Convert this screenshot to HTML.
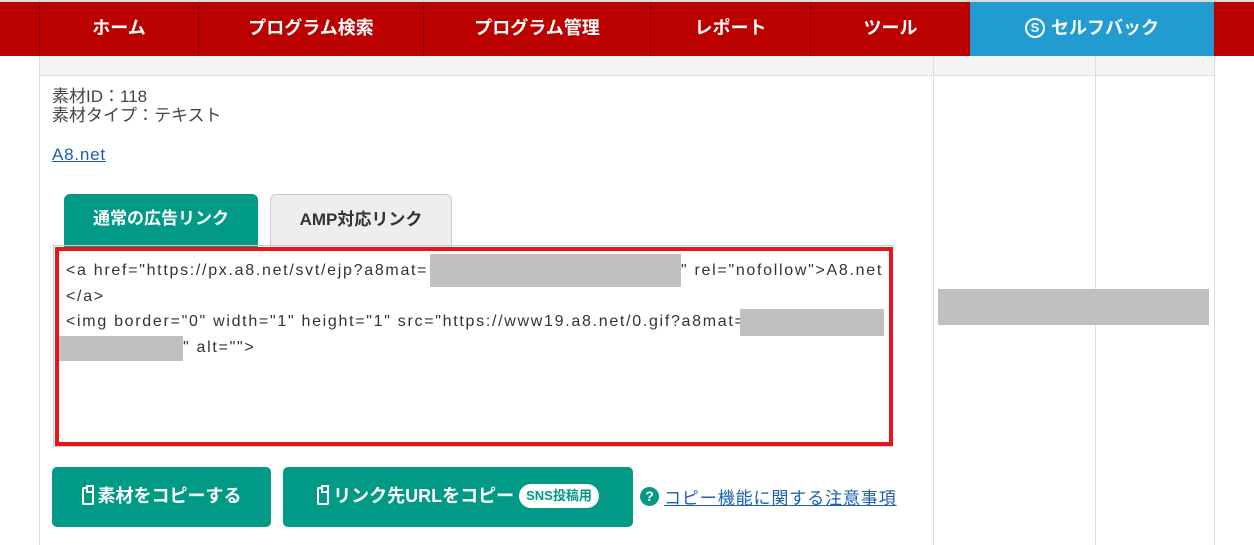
<!DOCTYPE html>
<html><head><meta charset="utf-8"><style>
*{margin:0;padding:0;box-sizing:border-box}
body{width:1254px;height:545px;overflow:hidden;background:#fff;font-family:"Liberation Sans","Noto Sans CJK JP",sans-serif;position:relative;color:#333}
.a{position:absolute}
.nav{left:0;top:2px;width:1254px;height:54px;background:#bb0000}
.ni{position:absolute;top:0;height:54px;border-left:1px solid #8a0000;color:#fff;font-weight:bold;font-size:18px;line-height:52px;text-align:center}
.g{background:#c0c0c0}
.code{font-size:16px;line-height:20px;color:#333;letter-spacing:1.7px;white-space:nowrap}
.btn{background:#009a86;color:#fff;font-weight:bold;font-size:18px;border-radius:5px;height:60px;line-height:58px;text-align:center}
.clip{display:inline-block;width:12px;height:18px;border:2px solid #fff;border-radius:2px;vertical-align:-3px;margin-right:4px;position:relative}
.clip:after{content:"";position:absolute;left:2px;top:-4px;width:4px;height:4px;border:2px solid #fff;background:#009a86}
</style></head><body>
<div class="a" style="left:0;top:0;width:1254px;height:2px;background:#ddd"></div>
<div class="a nav">
<div class="ni" style="left:39px;width:159px">ホーム</div>
<div class="ni" style="left:198px;width:225px">プログラム検索</div>
<div class="ni" style="left:423px;width:227px">プログラム管理</div>
<div class="ni" style="left:650px;width:160px">レポート</div>
<div class="ni" style="left:810px;width:160px">ツール</div>
<div class="ni" style="left:970px;width:244px;background:#229bd0;border-left:none"><span style="display:inline-block;width:20px;height:20px;border:2px solid #fff;border-radius:50%;font-size:13px;line-height:16px;vertical-align:2px;margin-right:6px">S</span>セルフバック</div>
</div>
<div class="a" style="left:39px;top:56px;width:1175px;height:20px;background:#f4f4f4;border-bottom:1px dotted #ccc"></div>
<div class="a" style="left:39px;top:56px;width:1px;height:489px;background:#ddd"></div>
<div class="a" style="left:933px;top:56px;width:1px;height:489px;background:#ddd"></div>
<div class="a" style="left:1095px;top:56px;width:1px;height:489px;background:#ddd"></div>
<div class="a" style="left:1214px;top:56px;width:1px;height:489px;background:#ddd"></div>
<div class="a" style="left:52px;top:87px;font-size:17px;line-height:19px;color:#444">素材ID：118<br>素材タイプ：テキスト</div>
<div class="a" style="left:52px;top:145px;font-size:17px;letter-spacing:0.8px;color:#1a5fb4;text-decoration:underline">A8.net</div>
<div class="a" style="left:64px;top:194px;width:194px;height:54px;background:#009a86;border-radius:6px 6px 0 0;color:#fff;font-weight:bold;font-size:17px;line-height:50px;text-align:center">通常の広告リンク</div>
<div class="a" style="left:270px;top:194px;width:182px;height:54px;background:#eee;border:1px solid #ccc;border-bottom:none;border-radius:6px 6px 0 0;color:#333;font-weight:bold;font-size:17px;line-height:50px;text-align:center">AMP対応リンク</div>
<div class="a" style="left:53px;top:245px;width:840px;height:202px;border:1px solid #ccc"></div>
<div class="a" style="left:55px;top:247px;width:838px;height:199px;border:4px solid #e8141c"></div>
<div class="a code" style="left:66px;top:261px">&lt;a href="https://px.a8.net/svt/ejp?a8mat=</div>
<div class="a code" style="left:681px;top:261px">" rel="nofollow"&gt;A8.net</div>
<div class="a code" style="left:66px;top:287px">&lt;/a&gt;</div>
<div class="a code" style="left:66px;top:312px">&lt;img border="0" width="1" height="1" src="https://www19.a8.net/0.gif?a8mat=</div>
<div class="a code" style="left:183px;top:338px">" alt=""&gt;</div>
<div class="a g" style="left:430px;top:254px;width:251px;height:33px"></div>
<div class="a g" style="left:740px;top:309px;width:144px;height:27px"></div>
<div class="a g" style="left:59px;top:336px;width:124px;height:25px"></div>
<div class="a g" style="left:938px;top:289px;width:271px;height:36px"></div>
<div class="a btn" style="left:52px;top:467px;width:219px"><span class="clip"></span>素材をコピーする</div>
<div class="a btn" style="left:283px;top:467px;width:350px"><span class="clip"></span>リンク先URLをコピー <span style="display:inline-block;background:#fff;color:#009a86;font-size:13px;line-height:24px;padding:0 7px;border-radius:12px;vertical-align:2px">SNS投稿用</span></div>
<div class="a" style="left:640px;top:487px;width:19px;height:19px;border-radius:50%;background:#009a86;color:#fff;font-weight:bold;font-size:14px;line-height:19px;text-align:center">?</div>
<div class="a" style="left:664px;top:484px;font-size:17px;letter-spacing:0.9px;color:#1a5fb4;text-decoration:underline">コピー機能に関する注意事項</div>
</body></html>
